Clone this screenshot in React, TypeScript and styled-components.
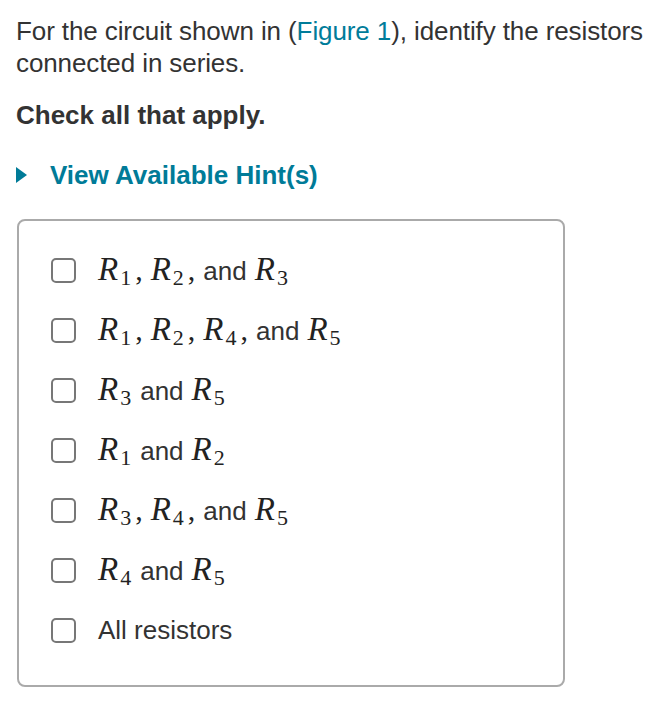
import React from 'react'
import styled, { createGlobalStyle } from 'styled-components'

const GlobalStyle = createGlobalStyle`
  html, body {
    margin: 0;
    padding: 0;
    background: #fff;
  }
  body {
    font-family: 'Liberation Sans', Arial, sans-serif;
    color: #333;
  }
`

const Page = styled.div`
  width: 672px;
  height: 706px;
  box-sizing: border-box;
  padding: 15px 0 0 16px;
`

const Prompt = styled.p`
  margin: 0;
  font-size: 26px;
  line-height: 32px;
  letter-spacing: -0.1px;
  color: #333;
`

const Link = styled.span`
  color: #007c9a;
`

const Instruction = styled.p`
  margin: 20px 0 0 0;
  font-size: 26px;
  line-height: 32px;
  font-weight: bold;
  color: #333;
`

const HintToggle = styled.div`
  margin-top: 28px;
  display: flex;
  align-items: center;
  gap: 23px;
  height: 32px;
  font-size: 26px;
  font-weight: bold;
  color: #007b98;
`

const Caret = styled.span`
  width: 0;
  height: 0;
  border-top: 8px solid transparent;
  border-bottom: 8px solid transparent;
  border-left: 11px solid #007b98;
`

const OptionsBox = styled.div`
  margin-top: 28px;
  margin-left: 1px;
  width: 548px;
  height: 468px;
  box-sizing: border-box;
  border: 2px solid #aaa;
  border-radius: 8px;
  padding: 31px 0 0 32px;
  display: flex;
  flex-direction: column;
  gap: 24px;
`

const OptionRow = styled.label`
  display: flex;
  align-items: center;
  gap: 22px;
  height: 36px;
  font-size: 26px;
  color: #333;
`

const Box = styled.span`
  width: 25px;
  height: 25px;
  box-sizing: border-box;
  border: 2px solid #777;
  border-radius: 5px;
  flex: none;
`

const Label = styled.span`
  display: block;
  white-space: pre;
  line-height: 36px;
`

const Var = styled.span`
  font-family: 'Liberation Serif', 'Times New Roman', serif;
  font-style: italic;
  font-size: 33px;
  color: #222;
  padding-right: 2px;
`

const Sub = styled.span`
  font-family: 'Liberation Serif', 'Times New Roman', serif;
  font-style: normal;
  font-size: 22px;
  vertical-align: -5px;
  line-height: 0;
  color: #222;
  margin-right: 3px;
`

const Comma = styled.span`
  font-family: 'Liberation Serif', 'Times New Roman', serif;
  font-size: 30px;
  color: #222;
  margin: 0 8px 0 1px;
`

const Word = styled.span<{ $afterComma?: boolean }>`
  margin: 0 8px 0 ${p => (p.$afterComma ? '0' : '6px')};
`

const R = ({ n }: { n: number }) => (
  <>
    <Var>R</Var>
    <Sub>{n}</Sub>
  </>
)

type Part = number | string

const options: Part[][] = [
  [1, ',', 2, ',', 'and', 3],
  [1, ',', 2, ',', 4, ',', 'and', 5],
  [3, 'and', 5],
  [1, 'and', 2],
  [3, ',', 4, ',', 'and', 5],
  [4, 'and', 5],
  ['All resistors'],
]

const renderPart = (p: Part, i: number, all: Part[]) => {
  if (typeof p === 'number') return <R key={i} n={p} />
  if (p === ',') return <Comma key={i}>,</Comma>
  if (all.length === 1) return <span key={i}>{p}</span>
  return (
    <Word key={i} $afterComma={all[i - 1] === ','}>
      {p}
    </Word>
  )
}

export default function App() {
  return (
    <>
      <GlobalStyle />
      <Page>
        <Prompt>
          For the circuit shown in (<Link>Figure 1</Link>), identify the resistors connected in series.
        </Prompt>
        <Instruction>Check all that apply.</Instruction>
        <HintToggle>
          <Caret />
          View Available Hint(s)
        </HintToggle>
        <OptionsBox>
          {options.map((parts, idx) => (
            <OptionRow key={idx}>
              <Box />
              <Label>{parts.map((p, i) => renderPart(p, i, parts))}</Label>
            </OptionRow>
          ))}
        </OptionsBox>
      </Page>
    </>
  )
}
